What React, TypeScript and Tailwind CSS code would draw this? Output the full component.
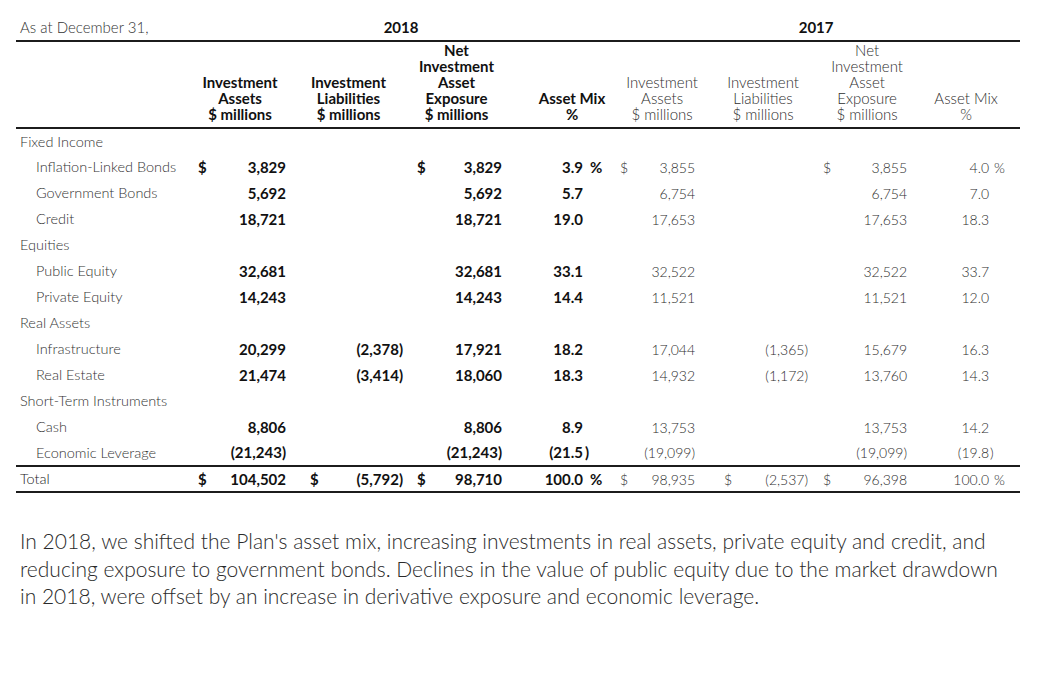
import type { ReactNode } from 'react';

type Row = {
  label: string;
  kind: 'cat' | 'item' | 'total';
  v?: string[]; // ia18, il18, net18, mix18, ia17, il17, net17, mix17
  dollar?: 'first' | 'total';
};

const rows: Row[] = [
  { label: 'Fixed Income', kind: 'cat' },
  {
    label: 'Inflation-Linked Bonds',
    kind: 'item',
    dollar: 'first',
    v: ['3,829', '', '3,829', '3.9 %', '3,855', '', '3,855', '4.0 %'],
  },
  { label: 'Government Bonds', kind: 'item', v: ['5,692', '', '5,692', '5.7', '6,754', '', '6,754', '7.0'] },
  { label: 'Credit', kind: 'item', v: ['18,721', '', '18,721', '19.0', '17,653', '', '17,653', '18.3'] },
  { label: 'Equities', kind: 'cat' },
  { label: 'Public Equity', kind: 'item', v: ['32,681', '', '32,681', '33.1', '32,522', '', '32,522', '33.7'] },
  { label: 'Private Equity', kind: 'item', v: ['14,243', '', '14,243', '14.4', '11,521', '', '11,521', '12.0'] },
  { label: 'Real Assets', kind: 'cat' },
  {
    label: 'Infrastructure',
    kind: 'item',
    v: ['20,299', '(2,378)', '17,921', '18.2', '17,044', '(1,365)', '15,679', '16.3'],
  },
  {
    label: 'Real Estate',
    kind: 'item',
    v: ['21,474', '(3,414)', '18,060', '18.3', '14,932', '(1,172)', '13,760', '14.3'],
  },
  { label: 'Short-Term Instruments', kind: 'cat' },
  { label: 'Cash', kind: 'item', v: ['8,806', '', '8,806', '8.9', '13,753', '', '13,753', '14.2'] },
  {
    label: 'Economic Leverage',
    kind: 'item',
    v: ['(21,243)', '', '(21,243)', '(21.5)', '(19,099)', '', '(19,099)', '(19.8)'],
  },
  {
    label: 'Total',
    kind: 'total',
    dollar: 'total',
    v: ['104,502', '(5,792)', '98,710', '100.0 %', '98,935', '(2,537)', '96,398', '100.0 %'],
  },
];

// column widths, left to right (table spans x 16 → 1020)
const widths = [
  'w-[174px]', 'w-[25px]', 'w-[75px]', 'w-[35px]', 'w-[82px]', 'w-[23px]', 'w-[76px]', 'w-[79px]', 'w-[27px]',
  'w-[23px]', 'w-[65px]', 'w-[35px]', 'w-[77px]', 'w-[28px]', 'w-[72px]', 'w-[78px]', 'w-[30px]',
];

function splitMix(v: string): [string, string] {
  if (v.endsWith(' %')) return [v.slice(0, -2), '%'];
  if (v.endsWith(')')) return [v.slice(0, -1), ')'];
  return [v, ''];
}

const bold = 'text-[15px] font-bold text-[#111]';
const light = 'text-[14px] font-light text-[#2e2e2e]';

function Head({ children, bolded, className = '' }: { children: ReactNode; bolded: boolean; className?: string }) {
  return (
    <th
      colSpan={2}
      className={`pb-[5px] align-bottom text-center text-[15px] leading-[16px] ${bolded ? 'font-bold text-[#111]' : 'font-light text-[#2e2e2e]'} ${className}`}
    >
      {children}
    </th>
  );
}

function DataRow({ row }: { row: Row }) {
  const isTotal = row.kind === 'total';
  const line = isTotal ? 'border-b-2 border-t-2 border-[#1c1c1c]' : '';
  if (row.kind === 'cat') {
    return (
      <tr className="h-[26px]">
        <td colSpan={17} className="pl-[4px] text-[14.5px] font-light text-[#333]">
          {row.label}
        </td>
      </tr>
    );
  }
  const v = row.v ?? [];
  const d = (i: number) => row.dollar === 'total' || (row.dollar === 'first' && (i === 0 || i === 2));
  const [m18, s18] = splitMix(v[3]);
  const [m17, s17] = splitMix(v[7]);
  return (
    <tr className={`h-[26px] ${line}`}>
      <td
        className={`${isTotal ? 'pl-[4px] text-[#222]' : 'pl-[20px] text-[#333]'} text-[14.5px] font-light whitespace-nowrap`}
      >
        {row.label}
      </td>
      <td className={`pl-[8px] ${bold}`}>{d(0) ? '$' : ''}</td>
      <td className={`pr-[4px] text-right ${bold}`}>{v[0]}</td>
      <td className={`pl-[20px] ${bold}`}>{d(1) ? '$' : ''}</td>
      <td className={`pr-[4px] text-right ${bold}`}>{v[1]}</td>
      <td className={`pl-[10px] ${bold}`}>{d(2) ? '$' : ''}</td>
      <td className={`pr-[4px] text-right ${bold}`}>{v[2]}</td>
      <td className={`pr-[2px] text-right ${bold}`}>{m18}</td>
      <td className={`${bold} ${s18 === ')' ? 'pl-0' : 'pl-[5px]'}`}>{s18}</td>
      <td className={`pl-[8px] ${light}`}>{d(0) ? '$' : ''}</td>
      <td className={`pr-[5px] text-right ${light}`}>{v[4]}</td>
      <td className={`pl-[24px] ${light}`}>{d(1) ? '$' : ''}</td>
      <td className={`pr-[4px] text-right ${light}`}>{v[5]}</td>
      <td className={`pl-[11px] ${light}`}>{d(2) ? '$' : ''}</td>
      <td className={`pr-[5px] text-right ${light}`}>{v[6]}</td>
      <td className={`pr-[1px] text-right ${light}`}>{m17}</td>
      <td className={`${light} ${s17 === ')' ? 'pl-0' : 'pl-[4px]'}`}>{s17}</td>
    </tr>
  );
}

export default function App() {
  return (
    <div className="min-h-[679px] w-[1056px] bg-white pl-[16px] pt-[14px] font-['Lato',sans-serif] text-[14px]">
      <table className="w-[1004px] table-fixed border-collapse">
        <colgroup>
          {widths.map((w, i) => (
            <col key={i} className={w} />
          ))}
        </colgroup>
        <thead>
          <tr className="h-[27px] border-b-2 border-[#1c1c1c]">
            <th className="pl-[4px] text-left align-middle text-[15px] font-light text-[#333]">As at December 31,</th>
            <th colSpan={8} className="text-center text-[15px] font-bold text-[#111]">
              2018
            </th>
            <th colSpan={8} className="text-center text-[15px] font-bold text-[#111]">
              2017
            </th>
          </tr>
          <tr className="h-[86px] border-b-2 border-[#1c1c1c]">
            <th />
            <Head bolded>
              Investment
              <br />
              Assets
              <br />$ millions
            </Head>
            <Head bolded>
              Investment
              <br />
              Liabilities
              <br />$ millions
            </Head>
            <Head bolded>
              Net
              <br />
              Investment
              <br />
              Asset
              <br />
              Exposure
              <br />$ millions
            </Head>
            <Head bolded className="pl-[26px]">
              Asset Mix
              <br />%
            </Head>
            <Head bolded={false} className="pl-[12px]">
              Investment
              <br />
              Assets
              <br />$ millions
            </Head>
            <Head bolded={false} className="pl-[14px]">
              Investment
              <br />
              Liabilities
              <br />$ millions
            </Head>
            <Head bolded={false} className="pl-[10px]">
              Net
              <br />
              Investment
              <br />
              Asset
              <br />
              Exposure
              <br />$ millions
            </Head>
            <Head bolded={false}>
              Asset Mix
              <br />%
            </Head>
          </tr>
        </thead>
        <tbody>
          {rows.map((r) => (
            <DataRow key={r.label} row={r} />
          ))}
        </tbody>
      </table>

      <p className="mt-[34px] pl-[4px] text-[21px] font-light leading-[27.5px] text-[#2a2a2a] whitespace-nowrap">
        In 2018, we shifted the Plan's asset mix, increasing investments in real assets, private equity and credit, and
        <br />
        reducing exposure to government bonds. Declines in the value of public equity due to the market drawdown
        <br />
        in 2018, were offset by an increase in derivative exposure and economic leverage.
      </p>
    </div>
  );
}
